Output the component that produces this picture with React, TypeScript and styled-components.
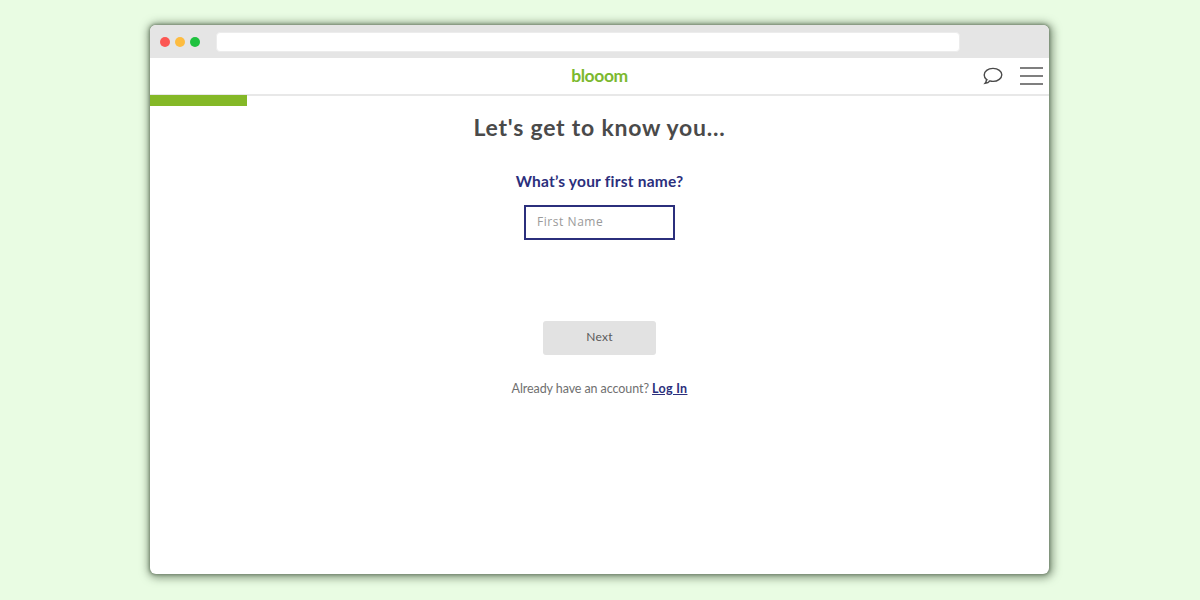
import React from "react";
import styled, { createGlobalStyle } from "styled-components";

const Global = createGlobalStyle`
  html, body { margin: 0; padding: 0; }
  body { background: #e9fce3; font-family: "Lato", "Liberation Sans", sans-serif; }
`;

const Page = styled.div`
  width: 1200px;
  height: 600px;
  padding: 25px 151px 25px 150px;
  box-sizing: border-box;
  background: #e9fce3;
  overflow: hidden;
`;

const Win = styled.div`
  height: 549px;
  border-radius: 6px;
  background: #fff;
  overflow: hidden;
  box-shadow: 0 0 3px 1px rgba(100, 118, 95, 0.7), 1px 1px 9px 3px rgba(85, 105, 80, 0.65);
  display: flex;
  flex-direction: column;
`;

const Chrome = styled.div`
  height: 33px;
  flex: none;
  background: #e5e5e5;
  display: flex;
  align-items: center;
  padding-left: 10px;
`;

const Dot = styled.span<{ $c: string }>`
  width: 10px;
  height: 10px;
  border-radius: 50%;
  background: ${(p) => p.$c};
  margin-right: 5px;
`;

const Address = styled.div`
  width: 742px;
  height: 18px;
  margin-left: 11px;
  border: 1px solid #ececec;
  border-radius: 4px;
  background: #fff;
`;

const Header = styled.header`
  height: 38px;
  box-sizing: border-box;
  flex: none;
  border-bottom: 2px solid #e8e8e8;
  display: grid;
  grid-template-columns: 1fr auto 1fr;
  align-items: center;
`;

const Logo = styled.div`
  grid-column: 2;
  font-family: "Lato", sans-serif;
  font-weight: 700;
  font-size: 17.5px;
  letter-spacing: -0.4px;
  color: #7cb92f;
  line-height: 36px;
`;

const HeaderIcons = styled.div`
  grid-column: 3;
  justify-self: end;
  display: flex;
  align-items: center;
  gap: 17px;
  padding-right: 6px;
`;

const Progress = styled.div`
  width: 97px;
  height: 11px;
  flex: none;
  margin-top: -1px;
  background: #84b827;
`;

const Main = styled.main`
  display: flex;
  flex-direction: column;
  align-items: center;
`;

const Title = styled.h1`
  margin: 7px 0 0;
  font-family: "Lato", sans-serif;
  font-size: 23px;
  line-height: 28px;
  font-weight: 700;
  letter-spacing: 0.78px;
  color: #4a4a4a;
`;

const Question = styled.label`
  margin-top: 30px;
  font-family: "Lato", sans-serif;
  font-size: 15.5px;
  line-height: 20px;
  font-weight: 700;
  letter-spacing: 0.22px;
  color: #2b2f7c;
`;

const Input = styled.input`
  margin-top: 14px;
  width: 151px;
  height: 35px;
  box-sizing: border-box;
  padding: 0 11px 2px;
  border: 2px solid #2b2f7c;
  background: #fff;
  font-family: "Open Sans", sans-serif;
  font-size: 12px;
  letter-spacing: 0.55px;
  outline: none;
  &::placeholder { color: #9a9a9a; opacity: 1; }
`;

const Next = styled.button`
  margin-top: 81px;
  width: 113px;
  height: 34px;
  padding: 0 0 4px;
  border: 0;
  border-radius: 3px;
  background: #e2e2e2;
  color: #5a5a5a;
  font-family: "Lato", sans-serif;
  font-size: 12px;
  letter-spacing: 0.3px;
`;

const Already = styled.p`
  margin: 25px 0 0;
  font-family: "Lato", sans-serif;
  font-size: 12.5px;
  line-height: 17px;
  letter-spacing: -0.08px;
  color: #707070;
`;

const LogIn = styled.a`
  color: #2b2f7c;
  font-weight: 700;
  letter-spacing: 0.3px;
  text-decoration: underline;
`;

export default function App() {
  return (
    <Page>
      <Global />
      <Win>
        <Chrome>
          <Dot $c="#fc5753" />
          <Dot $c="#fdbc40" />
          <Dot $c="#1fc23f" />
          <Address />
        </Chrome>
        <Header>
          <Logo>blooom</Logo>
          <HeaderIcons>
            <svg width="20" height="18" viewBox="0 0 20 18" fill="none" stroke="#4a4a4a" strokeWidth="1.4">
              <path d="M3.6 12.6C2 11.4 1.2 9.8 1.2 8 1.2 4.4 4.8 1.4 10 1.4s8.8 3 8.8 6.4-3.8 6.6-8.8 6.6c-1.1 0-2.2-.2-3.1-.5-1 1.4-2.6 2.3-4.9 2.5.9-1 1.5-2.2 1.5-3.8z" />
            </svg>
            <svg width="23" height="18" viewBox="0 0 23 18" stroke="#555" strokeWidth="1.5">
              <path d="M0 1h23M0 9h23M0 17h23" />
            </svg>
          </HeaderIcons>
        </Header>
        <Progress />
        <Main>
          <Title>Let's get to know you...</Title>
          <Question>What’s your first name?</Question>
          <Input placeholder="First Name" />
          <Next>Next</Next>
          <Already>
            Already have an account? <LogIn href="#">Log In</LogIn>
          </Already>
        </Main>
      </Win>
    </Page>
  );
}
